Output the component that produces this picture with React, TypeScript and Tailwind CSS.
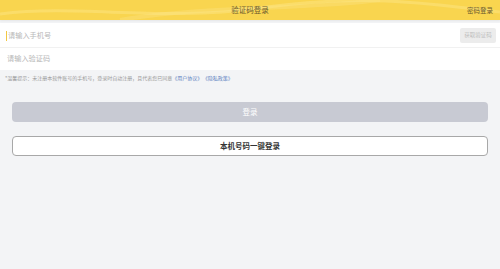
import React from 'react';

const HeaderWaves = () => (
  <svg className="absolute inset-0 h-full w-full" viewBox="0 0 500 20" preserveAspectRatio="none">
    <path d="M0 14 C 80 4, 160 22, 260 8 S 420 2, 500 12" stroke="#fde68a" strokeOpacity="0.45" strokeWidth="3" fill="none" />
    <path d="M120 20 C 200 6, 300 10, 380 0" stroke="#fde68a" strokeOpacity="0.35" strokeWidth="4" fill="none" />
  </svg>
);

export default function App() {
  return (
    <div
      className="flex h-[269px] w-[500px] flex-col bg-[#f3f4f6]"
      style={{ fontFamily: '"Noto Sans CJK SC", "Noto Sans", sans-serif' }}
    >
      <header className="relative flex h-[20px] shrink-0 items-center justify-center overflow-hidden bg-[#f9d54f] shadow-[0_1px_2px_rgba(0,0,0,0.06)]">
        <HeaderWaves />
        <span className="relative text-[7.5px] leading-none text-[#6b5a2e]">验证码登录</span>
        <span className="absolute right-[7px] text-[6.5px] leading-none text-[#6b5a2e]">密码登录</span>
      </header>

      <div className="mt-[3px] bg-white">
        <div className="flex h-[25px] items-center justify-between border-b border-[#f1f1f1] pl-[6px] pr-[4px] pt-[1px]">
          <div className="flex items-center">
            <span className="mr-[1px] h-[10px] w-[1px] bg-[#f2c744]" />
            <span className="text-[7.2px] leading-none text-[#b8b8b8]">请输入手机号</span>
          </div>
          <button className="flex h-[15px] w-[36px] items-center justify-center rounded-[2px] bg-[#ececec] text-[5.5px] leading-none text-[#bdbdbd]">
            获取验证码
          </button>
        </div>
        <div className="flex h-[22px] items-center pl-[7px]">
          <span className="text-[7.2px] leading-none text-[#b8b8b8]">请输入验证码</span>
        </div>
      </div>

      <p className="mt-[5px] pl-[5px] text-[5px] leading-none text-[#9a9a9a]">
        *温馨提示：未注册本软件账号的手机号，登录时自动注册，且代表您已同意
        <span className="text-[#5b7fc0]">《用户协议》</span>
        <span className="ml-[3px] text-[#5b7fc0]">《隐私政策》</span>
      </p>

      <div className="mt-[22px] flex flex-col gap-[14px] px-[12px]">
        <button className="flex h-[20px] items-center justify-center rounded-[4px] bg-[#c8cad3] text-[7.5px] leading-none text-white">
          登录
        </button>
        <button className="flex h-[20px] items-center justify-center rounded-[4px] border border-[#a8a8a8] bg-white text-[7.5px] font-bold leading-none text-[#333]">
          本机号码一键登录
        </button>
      </div>
    </div>
  );
}
